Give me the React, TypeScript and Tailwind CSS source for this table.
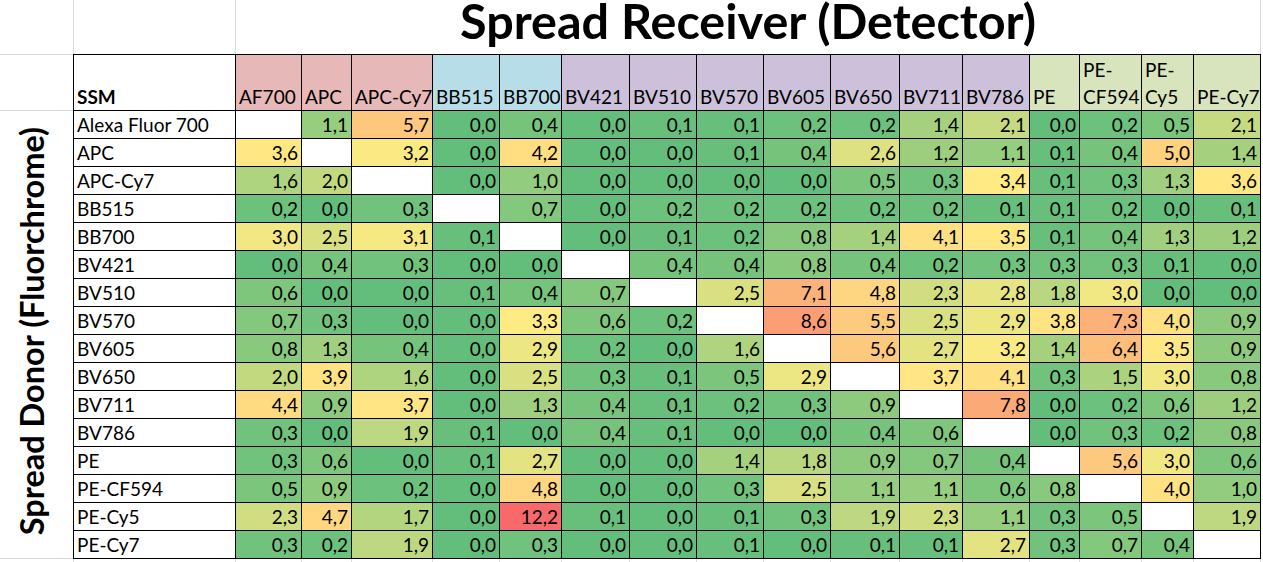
const cols = [
  { name: "AF700", bg: "bg-[#e6b8b7]" },
  { name: "APC", bg: "bg-[#e6b8b7]" },
  { name: "APC-Cy7", bg: "bg-[#e6b8b7]" },
  { name: "BB515", bg: "bg-[#b7dee8]" },
  { name: "BB700", bg: "bg-[#b7dee8]" },
  { name: "BV421", bg: "bg-[#ccc0da]" },
  { name: "BV510", bg: "bg-[#ccc0da]" },
  { name: "BV570", bg: "bg-[#ccc0da]" },
  { name: "BV605", bg: "bg-[#ccc0da]" },
  { name: "BV650", bg: "bg-[#ccc0da]" },
  { name: "BV711", bg: "bg-[#ccc0da]" },
  { name: "BV786", bg: "bg-[#ccc0da]" },
  { name: "PE", bg: "bg-[#d8e4bc]" },
  { name: "PE-|CF594", bg: "bg-[#d8e4bc]" },
  { name: "PE-|Cy5", bg: "bg-[#d8e4bc]" },
  { name: "PE-Cy7", bg: "bg-[#d8e4bc]" },
];

const rows: [string, string][] = [
  ["Alexa Fluor 700", "_ 1,1 5,7 0,0 0,4 0,0 0,1 0,1 0,2 0,2 1,4 2,1 0,0 0,2 0,5 2,1"],
  ["APC", "3,6 _ 3,2 0,0 4,2 0,0 0,0 0,1 0,4 2,6 1,2 1,1 0,1 0,4 5,0 1,4"],
  ["APC-Cy7", "1,6 2,0 _ 0,0 1,0 0,0 0,0 0,0 0,0 0,5 0,3 3,4 0,1 0,3 1,3 3,6"],
  ["BB515", "0,2 0,0 0,3 _ 0,7 0,0 0,2 0,2 0,2 0,2 0,2 0,1 0,1 0,2 0,0 0,1"],
  ["BB700", "3,0 2,5 3,1 0,1 _ 0,0 0,1 0,2 0,8 1,4 4,1 3,5 0,1 0,4 1,3 1,2"],
  ["BV421", "0,0 0,4 0,3 0,0 0,0 _ 0,4 0,4 0,8 0,4 0,2 0,3 0,3 0,3 0,1 0,0"],
  ["BV510", "0,6 0,0 0,0 0,1 0,4 0,7 _ 2,5 7,1 4,8 2,3 2,8 1,8 3,0 0,0 0,0"],
  ["BV570", "0,7 0,3 0,0 0,0 3,3 0,6 0,2 _ 8,6 5,5 2,5 2,9 3,8 7,3 4,0 0,9"],
  ["BV605", "0,8 1,3 0,4 0,0 2,9 0,2 0,0 1,6 _ 5,6 2,7 3,2 1,4 6,4 3,5 0,9"],
  ["BV650", "2,0 3,9 1,6 0,0 2,5 0,3 0,1 0,5 2,9 _ 3,7 4,1 0,3 1,5 3,0 0,8"],
  ["BV711", "4,4 0,9 3,7 0,0 1,3 0,4 0,1 0,2 0,3 0,9 _ 7,8 0,0 0,2 0,6 1,2"],
  ["BV786", "0,3 0,0 1,9 0,1 0,0 0,4 0,1 0,0 0,0 0,4 0,6 _ 0,0 0,3 0,2 0,8"],
  ["PE", "0,3 0,6 0,0 0,1 2,7 0,0 0,0 1,4 1,8 0,9 0,7 0,4 _ 5,6 3,0 0,6"],
  ["PE-CF594", "0,5 0,9 0,2 0,0 4,8 0,0 0,0 0,3 2,5 1,1 1,1 0,6 0,8 _ 4,0 1,0"],
  ["PE-Cy5", "2,3 4,7 1,7 0,0 12,2 0,1 0,0 0,1 0,3 1,9 2,3 1,1 0,3 0,5 _ 1,9"],
  ["PE-Cy7", "0,3 0,2 1,9 0,0 0,3 0,0 0,0 0,1 0,0 0,1 0,1 2,7 0,3 0,7 0,4 _"],
];

// widths of the grid columns, first one is the label column
const widths = [162, 66, 50, 81, 67, 62, 68, 67, 67, 67, 69, 63, 67, 50, 62, 52, 67];

// excel style 3-colour scale: green -> yellow -> red
const GREEN = [99, 190, 123];
const YELLOW = [255, 235, 132];
const RED = [248, 105, 107];
const MID = 3.3;
const MAX = 12.2;

const scaleColor = (v: number) => {
  const [a, b, t] = v <= MID ? [GREEN, YELLOW, v / MID] : [YELLOW, RED, (v - MID) / (MAX - MID)];
  const c = a.map((x, i) => Math.round(x + (b[i] - x) * t));
  return `rgb(${c[0]}, ${c[1]}, ${c[2]})`;
};

const App = () => {
  return (
    <div className="w-[1263px] h-[562px] overflow-hidden bg-white text-black font-[Lato,sans-serif] flex">
      {/* Column A: donor axis label */}
      <div className="w-[73px] shrink-0 flex flex-col">
        <div className="h-[55px] border-b border-[#dadada]"></div>
        <div className="h-[56px] border-b border-[#dadada]"></div>
        <div className="h-[448px] border-b border-[#dadada] flex items-center justify-center pr-[9px] pb-[6px]">
          <span className="[writing-mode:vertical-rl] rotate-180 font-bold text-[32.5px] leading-[32px] whitespace-nowrap">
            Spread Donor (Fluorchrome)
          </span>
        </div>
        <div className="flex-1"></div>
      </div>

      <div className="flex flex-col">
        {/* Title row */}
        <div className="h-[54px] flex">
          <div className="w-[163px] border-l border-r border-[#dadada]"></div>
          <div className="w-[1025px] border-r border-[#dadada] flex justify-center items-start pt-[5px]">
            <h1 className="font-bold text-[48.5px] leading-[30px] whitespace-nowrap">Spread Receiver (Detector)</h1>
          </div>
        </div>

        {/* SSM table */}
        <div className="border-l border-t border-black grid grid-cols-[162px_66px_50px_81px_67px_62px_68px_67px_67px_67px_69px_63px_67px_50px_62px_52px_67px] grid-rows-[56px_repeat(16,28px)] text-[19px] leading-[27px]">
          <div className="border-r border-b border-black flex items-end px-[3px] font-bold">SSM</div>
          {cols.map(c => (
            <div key={c.name} className={`${c.bg} border-r border-b border-black flex items-end px-[3px] whitespace-nowrap`}>
              <div>
                {c.name.split("|").map(line => (
                  <div key={line}>{line}</div>
                ))}
              </div>
            </div>
          ))}
          {rows.map(([label, vals]) => (
            <>
              <div key={label} className="border-r border-b border-black flex items-end px-[3px] whitespace-nowrap">
                {label}
              </div>
              {vals.split(" ").map((v, i) => (
                <div
                  key={label + i}
                  className="border-r border-b border-black flex items-end justify-end px-[3px]"
                  style={{ backgroundColor: v === "_" ? "#ffffff" : scaleColor(parseFloat(v.replace(",", "."))) }}
                >
                  {v === "_" ? "" : v}
                </div>
              ))}
            </>
          ))}
        </div>

        {/* gridlines below the table */}
        <div className="flex flex-1">
          <div className="w-px bg-[#dadada]"></div>
          {widths.map((w, i) => (
            <div key={i} className="border-r border-[#dadada]" style={{ width: w }}></div>
          ))}
        </div>
      </div>
    </div>
  );
};

export default App;
